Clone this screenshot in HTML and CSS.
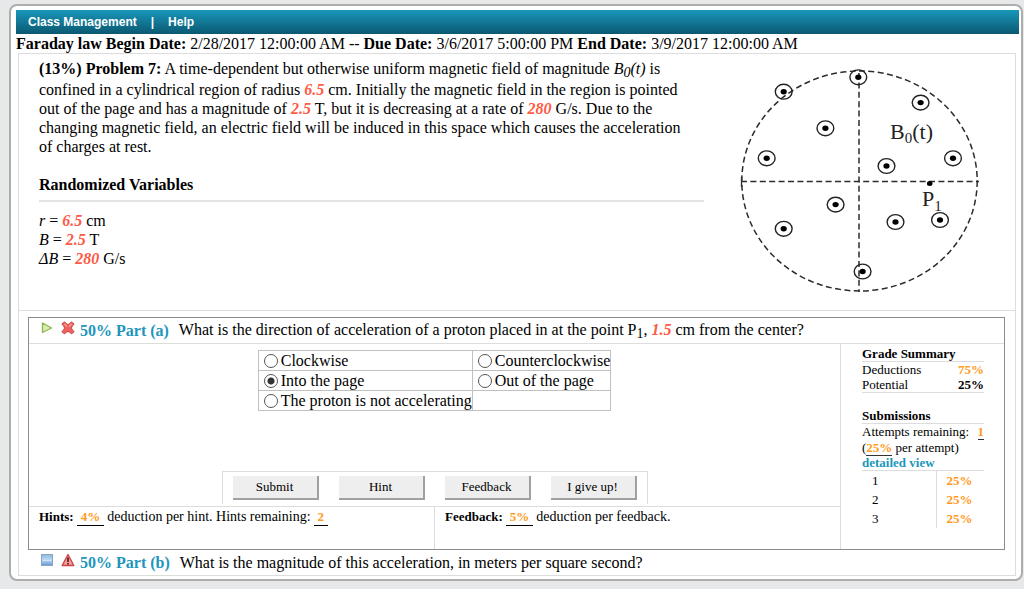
FILE: index.html
```html
<!DOCTYPE html>
<html lang="en">
<head>
<meta charset="utf-8">
<title>Faraday law</title>
<link rel="stylesheet" href="styles.css">
</head>
<body>
<div class="frame">
  <nav class="menu"><a href="#">Class Management</a><span>|</span><a href="#">Help</a></nav>
  <div class="dates"><b>Faraday law</b> <b>Begin Date:</b> 2/28/2017 12:00:00 AM -- <b>Due Date:</b> 3/6/2017 5:00:00 PM <b>End Date:</b> 3/9/2017 12:00:00 AM</div>
  <main class="sheet">
    <section class="problem">
      <div class="statement">
        <p class="text"><b>(13%)&nbsp;Problem 7:</b> A time-dependent but otherwise uniform magnetic field of magnitude <i>B<sub>0</sub>(t)</i> is<br>confined in a cylindrical region of radius <em class="num">6.5</em> cm. Initially the magnetic field in the region is pointed<br>out of the page and has a magnitude of <em class="num">2.5</em> T, but it is decreasing at a rate of <em class="num">280</em> G/s. Due to the<br>changing magnetic field, an electric field will be induced in this space which causes the acceleration<br>of charges at rest.</p>
        <h2 class="subhead">Randomized Variables</h2>
        <p class="text"><i>r</i> = <em class="num">6.5</em> cm<br><i>B</i> = <em class="num">2.5</em> T<br><i>ΔB</i> = <em class="num">280</em> G/s</p>
      </div>
      <svg class="figure" width="246" height="230" viewBox="736 66 246 230" role="img" aria-label="Circular magnetic field region">
        <defs><g id="out"><ellipse rx="8.4" ry="7.4" fill="none" stroke="#222" stroke-width="1.4"/><ellipse rx="3.1" ry="2.7" fill="#000"/></g></defs>
        <g fill="none" stroke="#2c2c2c" stroke-width="1.5" stroke-dasharray="6 3.4">
          <ellipse cx="859.5" cy="181" rx="117.7" ry="110"/>
          <path d="M741 181.500H979"/>
          <path d="M859 73V292"/>
        </g>
        <path d="M741.500 177V187" stroke="#2c2c2c" stroke-width="1.300"/>
        <use href="#out" x="783.7" y="91.7"/><use href="#out" x="858.3" y="77.3"/>
        <use href="#out" x="920.6" y="102.6"/><use href="#out" x="825.4" y="128.3"/>
        <use href="#out" x="766.700" y="158.300"/><use href="#out" x="953" y="158.300"/>
        <use href="#out" x="886.500" y="166"/><use href="#out" x="835.600" y="204.600"/>
        <use href="#out" x="783.700" y="228.800"/><use href="#out" x="895.500" y="222"/>
        <use href="#out" x="940" y="220"/><use href="#out" x="862.600" y="271.500"/>
        <ellipse cx="929.700" cy="183.400" rx="2.800" ry="2.500"/>
        <text x="890" y="139" class="fig-text">B<tspan class="fig-sub" dy="4">0</tspan><tspan dy="-4">(t)</tspan></text>
        <text x="922" y="206" class="fig-text">P<tspan class="fig-sub" dy="5">1</tspan></text>
      </svg>
    </section>

    <section class="part">
      <h3 class="part-head">
        <svg class="icon" width="14" height="14" viewBox="0 0 14 14"><path d="M2.500 2L11.500 7L2.500 11.500Z" fill="#d9eeae" stroke="#8fb552" stroke-width="1.300" stroke-linejoin="round"/></svg>
        <svg class="icon" width="14" height="14" viewBox="0 0 14 14"><path d="M3.500 .8L5.200 2.600L7 3.600L8.800 2.600L10.500 .8L13.200 3.200L11.200 5L10.500 7L11.200 8.800L13.200 10.600L10.500 13L8.800 11.200L7 10.500L5.200 11.200L3.500 13L.8 10.600L2.800 8.800L3.500 7L2.800 5L.8 3.200Z" fill="#f0605e" stroke="#c9464a" stroke-width="1" stroke-linejoin="round"/><path d="M3.500 3L6 5.500M10.500 3L8 5.500" stroke="#f9a9a4" stroke-width="1.200"/></svg>
        <b class="part-name">50% Part (a)</b><span>What is the direction of acceleration of a proton placed in at the point P<sub>1</sub>, <em class="num">1.5</em> cm from the center?</span>
      </h3>
      <div class="part-body">
        <div class="work">
          <form class="answer">
            <table class="choices">
              <tr><td><label><input type="radio" name="dir">Clockwise</label></td><td><label><input type="radio" name="dir">Counterclockwise</label></td></tr>
              <tr><td><label><input type="radio" name="dir" checked>Into the page</label></td><td><label><input type="radio" name="dir">Out of the page</label></td></tr>
              <tr><td><label><input type="radio" name="dir">The proton is not accelerating</label></td><td></td></tr>
            </table>
            <div class="actions"><button type="button">Submit</button><button type="button">Hint</button><button type="button">Feedback</button><button type="button">I give up!</button></div>
          </form>
          <div class="notes">
            <div class="note"><b>Hints:</b><span class="blank">4%</span>deduction per hint. Hints remaining:<span class="blank">2</span></div>
            <div class="note"><b>Feedback:</b><span class="blank">5%</span>deduction per feedback.</div>
          </div>
        </div>
        <aside class="grades">
          <h4>Grade Summary</h4>
          <div class="row"><span>Deductions</span><b class="amber">75%</b></div>
          <div class="row last"><span>Potential</span><b>25%</b></div>
          <h4 class="submissions">Submissions</h4>
          <div class="row"><span>Attempts remaining:</span><b class="amber under">1</b></div>
          <div>(<b class="amber under">25%</b> per attempt)</div>
          <a href="#">detailed view</a>
          <table class="tries">
            <tr><td>1</td><td>25%</td></tr>
            <tr><td>2</td><td>25%</td></tr>
            <tr><td>3</td><td>25%</td></tr>
          </table>
        </aside>
      </div>
    </section>

    <h3 class="part-head next">
      <svg class="icon" width="14" height="14" viewBox="0 0 14 14"><defs><linearGradient id="blue" x1="0" y1="0" x2="0" y2="1"><stop offset="0" stop-color="#8db8e4"/><stop offset=".5" stop-color="#bdd8f3"/><stop offset="1" stop-color="#5f97d2"/></linearGradient></defs><rect x="1.500" y="1.500" width="11" height="11" fill="url(#blue)" stroke="#8ba4c2"/><path d="M3 7.500H11" stroke="#d3e5f6"/></svg>
      <svg class="icon" width="14" height="14" viewBox="0 0 14 14"><path d="M7 1.500L12.800 12.500H1.200Z" fill="#f4a09b" stroke="#cf4549" stroke-width="1.400" stroke-linejoin="round"/><path d="M7 4.500V9M7 10V11.500" stroke="#4d1518" stroke-width="1.600"/></svg>
      <b class="part-name">50% Part (b)</b><span>What is the magnitude of this acceleration, in meters per square second?</span>
    </h3>
  </main>
</div>
</body>
</html>
```
FILE: styles.css
```css
* { box-sizing: border-box; }
body {
  margin: 0;
  padding: 4px 1px 8px 9px;
  background: #e6e8ea;
  color: #000;
  font: 16px/19px "Liberation Serif", "Times New Roman", serif;
}
p, h2, h3, h4 { margin: 0; font-size: inherit; font-weight: normal; }
sub { font-size: 14px; line-height: 14px; vertical-align: -3px; }
.frame {
  border: 2px solid #adadad;
  border-radius: 8px;
  background: #fff;
  padding: 4px 2px 3px 5px;
}
.menu {
  display: flex;
  align-items: center;
  gap: 14px;
  height: 24px;
  padding: 0 12px;
  background: linear-gradient(#1897b9, #0b5872);
  color: #fff;
  font: bold 12px/24px "Liberation Sans", Arial, sans-serif;
}
.menu a { color: inherit; text-decoration: none; }
.sheet { margin: 0 3px 0 2px; border: 1px solid #ddd; padding-bottom: 1px; }
.problem {
  display: flex;
  justify-content: space-between;
  padding: 5px 33px 14px 20px;
  min-height: 257px;
  border-bottom: 1px solid #ddd;
}
.statement { flex: 0 1 665px; }
.figure { flex: none; margin-top: 7px; }
.fig-text { font-size: 22px; fill: #222; }
.fig-sub { font-size: 15px; }
.num { color: #ff5a44; font-weight: bold; }
.subhead {
  margin: 19px 0 9px;
  padding-bottom: 6px;
  border-bottom: 2px solid #e4e4e4;
  font-weight: bold;
}
.part { margin: 6px 10px 0 9px; border: 1px solid #8c8c8c; }
.part-head { display: flex; align-items: center; height: 25px; padding-left: 11px; }
.part-head.next { margin-left: 10px; height: 24px; }
.icon { flex: none; margin: 0 7px 5px 0; }
.icon + .icon { margin-right: 5px; }
.part-name { margin-right: 10px; color: #2196bc; }
.part-body { display: flex; border-top: 1px solid #ddd; }
.work { flex: 1; display: flex; flex-direction: column; }
.answer { flex: 1; display: flex; flex-direction: column; align-items: center; padding: 6px 0 2px; }
.choices { border-collapse: collapse; }
.choices td { height: 20px; padding: 0 0 0 5px; border: 1px solid #c0c0c0; }
.choices label { display: flex; align-items: center; gap: 3px; }
.choices input {
  appearance: none;
  flex: none;
  width: 14px;
  height: 14px;
  margin: 0;
  border: 1px solid #555;
  border-radius: 50%;
  background: #fff;
}
.choices input:checked { background: radial-gradient(circle, #333 0 3px, #fff 4px); }
.actions {
  display: flex;
  gap: 20px;
  margin-top: auto;
  padding: 4px 10px;
  border: 1px solid #ddd;
  border-bottom: 0;
}
button {
  width: 86px;
  height: 24px;
  padding: 0;
  border: solid;
  border-width: 0 2px 2px 0;
  border-color: #a0a0a0;
  background: #eee;
  color: #000;
  font: 13px/20px "Liberation Serif", "Times New Roman", serif;
}
.notes { display: flex; height: 43px; border-top: 1px solid #ddd; font-size: 14px; }
.note { flex: 1; padding-left: 10px; }
.note + .note { border-left: 1px solid #ddd; }
.blank {
  display: inline-block;
  margin: 0 3px;
  padding: 0 4px;
  border-bottom: 1px solid #000;
  color: #ff9a1c;
  font-size: 13px;
  font-weight: bold;
  line-height: 16px;
}
.note b { font-size: 13px; }
.grades { width: 164px; padding: 2px 20px 21px 21px; border-left: 1px solid #ddd; font-size: 13px; line-height: 15px; }
.grades h4 { border-bottom: 1px solid #ddd; font-weight: bold; }
.grades .submissions { margin-top: 15px; }
.row { display: flex; justify-content: space-between; }
.row.last { border-bottom: 1px solid #ddd; }
.amber { color: #ff9a1c; }
.under { border-bottom: 1px solid #333; }
.grades a { color: #2196bc; font-weight: bold; text-decoration: none; }
.tries { width: 100%; border-collapse: collapse; border-top: 1px solid #ddd; }
.tries td { padding: 2px 0 2px 10px; }
.tries td + td { width: 48px; border-left: 1px solid #ddd; color: #ff9a1c; font-weight: bold; }
```
